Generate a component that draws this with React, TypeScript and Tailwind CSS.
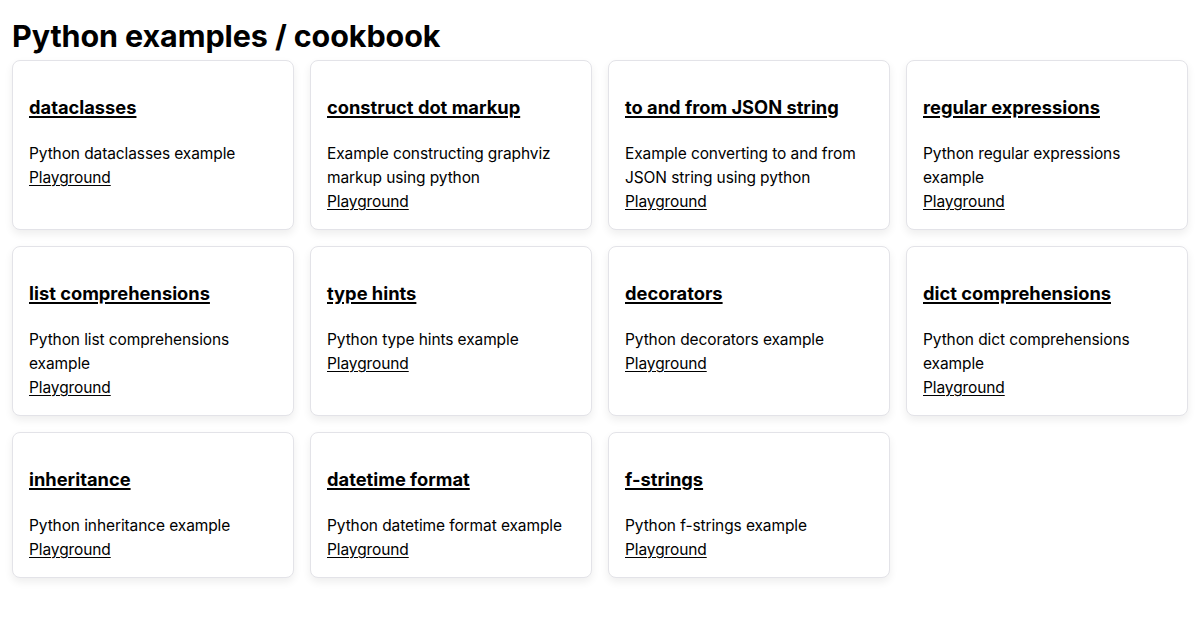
import React from "react";

const items = [
  { t: "dataclasses", d: "Python dataclasses example" },
  { t: "construct dot markup", d: "Example constructing graphviz markup using python" },
  { t: "to and from JSON string", d: "Example converting to and from JSON string using python" },
  { t: "regular expressions", d: "Python regular expressions example" },
  { t: "list comprehensions", d: "Python list comprehensions example" },
  { t: "type hints", d: "Python type hints example" },
  { t: "decorators", d: "Python decorators example" },
  { t: "dict comprehensions", d: "Python dict comprehensions example" },
  { t: "inheritance", d: "Python inheritance example" },
  { t: "datetime format", d: "Python datetime format example" },
  { t: "f-strings", d: "Python f-strings example" },
];

export default function App() {
  return (
    <div
      className="min-h-[630px] bg-white px-3 text-black"
      style={{ fontFamily: "Inter, 'Noto Sans', sans-serif" }}
    >
      <h1 className="pt-[16px] text-[30.5px] font-bold leading-[40px] tracking-[-0.1px]">
        Python examples / cookbook
      </h1>
      <div className="mt-[4px] grid grid-cols-4 gap-x-4 gap-y-4">
        {items.map((it) => (
          <div
            key={it.t}
            className="rounded-lg border border-[#e3e3e8] bg-white px-4 pb-[15px] pt-[32px] shadow-[0_4px_8px_rgba(0,0,0,0.07)]"
          >
            <h3 className="text-[18.3px] font-bold leading-[28px] underline decoration-[1.5px] underline-offset-[2px]">
              {it.t}
            </h3>
            <p className="mt-[21px] text-[15.5px] leading-[24px] tracking-[-0.1px]">{it.d}</p>
            <a className="block text-[15.5px] leading-[24px] tracking-[-0.1px] underline decoration-1 underline-offset-[2px]">
              Playground
            </a>
          </div>
        ))}
      </div>
    </div>
  );
}
